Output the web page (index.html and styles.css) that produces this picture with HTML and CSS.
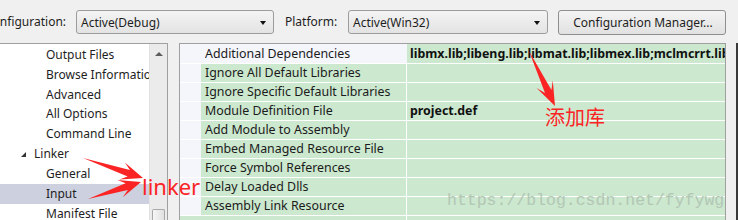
FILE: index.html
```html
<!DOCTYPE html>
<html>
<head>
<meta charset="utf-8">
<link rel="stylesheet" href="styles.css">
</head>
<body>
<div class="window">
  <div class="toolbar">
    <span class="lbl lbl-config">Configuration:</span>
    <div class="combo combo-config"><span class="combo-text">Active(Debug)</span><i class="caret"></i></div>
    <span class="lbl lbl-platform">Platform:</span>
    <div class="combo combo-platform"><span class="combo-text">Active(Win32)</span><i class="caret"></i></div>
    <div class="btn">Configuration Manager...</div>
  </div>
  <div class="main">
    <div class="tree">
      <ul class="tree-list">
        <li class="item l2">Output Files</li>
        <li class="item l2">Browse Information</li>
        <li class="item l2">Advanced</li>
        <li class="item l2">All Options</li>
        <li class="item l2">Command Line</li>
        <li class="item l1"><i class="expander"></i>Linker</li>
        <li class="item l2">General</li>
        <li class="item l2 selected">Input</li>
        <li class="item l2">Manifest File</li>
      </ul>
      <div class="vscroll">
        <i class="up-arrow"></i>
        <div class="thumb"></div>
      </div>
    </div>
    <div class="grid">
      <div class="row first"><div class="gutter"></div><div class="name">Additional Dependencies</div><div class="val">libmx.lib;libeng.lib;libmat.lib;libmex.lib;mclmcrrt.lib</div></div>
      <div class="row"><div class="gutter"></div><div class="name">Ignore All Default Libraries</div><div class="val"></div></div>
      <div class="row"><div class="gutter"></div><div class="name">Ignore Specific Default Libraries</div><div class="val"></div></div>
      <div class="row"><div class="gutter"></div><div class="name">Module Definition File</div><div class="val">project.def</div></div>
      <div class="row"><div class="gutter"></div><div class="name">Add Module to Assembly</div><div class="val"></div></div>
      <div class="row"><div class="gutter"></div><div class="name">Embed Managed Resource File</div><div class="val"></div></div>
      <div class="row"><div class="gutter"></div><div class="name">Force Symbol References</div><div class="val"></div></div>
      <div class="row"><div class="gutter"></div><div class="name">Delay Loaded Dlls</div><div class="val"></div></div>
      <div class="row"><div class="gutter"></div><div class="name">Assembly Link Resource</div><div class="val"></div></div>
      <div class="row category"><div class="gutter"></div><div class="name"></div><div class="val"></div></div>
      <div class="watermark">https://blog.csdn.net/fyfywg</div>
    </div>
    <div class="edge"></div>
  </div>
</div>
<svg class="annot" width="738" height="220" viewBox="0 0 738 220" xmlns="http://www.w3.org/2000/svg">
  <polygon fill="#fb2424" points="83,158 129.9,170 124.9,162.5 143,178 119.3,179.5 127.7,176.6"/>
  <polygon fill="#fb2424" points="88,199 125.6,183.3 117.4,180.1 141,182 122.8,197.3 127.8,189.9"/>
  <polygon fill="#fb2424" points="529,51 551.4,90 552.8,80.5 555,106 536.6,88.1 545,93"/>
</svg>
<div class="note note-linker">linker</div>
<div class="note note-lib">添加库</div>
</body>
</html>
```

FILE: styles.css
```css
html, body {
  margin: 0;
  padding: 0;
}
body {
  width: 738px;
  height: 220px;
  overflow: hidden;
  position: relative;
  background: #f0f0f0;
  font-family: "Noto Sans", "Open Sans", sans-serif;
  font-size: 12px;
  color: #1e1e1e;
}
.window {
  margin-left: -15px;
  width: 753px;
  height: 220px;
  overflow: hidden;
}
.toolbar {
  height: 43px;
  box-sizing: border-box;
  padding-top: 10px;
  display: flex;
  align-items: flex-start;
}
.lbl {
  height: 24px;
  line-height: 24px;
  white-space: nowrap;
}
.lbl-config {
  width: 91px;
}
.lbl-platform {
  width: 63px;
  margin-left: 11px;
}
.combo {
  height: 24px;
  box-sizing: border-box;
  border: 1px solid #9c9c9c;
  border-radius: 3px;
  background: linear-gradient(#f4f4f4, #e3e3e3);
  display: flex;
  align-items: center;
  padding-left: 4px;
  padding-right: 7px;
}
.combo-config {
  width: 198px;
}
.combo-platform {
  width: 200px;
}
.combo-text {
  flex: 1;
  white-space: nowrap;
}
.caret {
  width: 0;
  height: 0;
  border-left: 3.5px solid transparent;
  border-right: 3.5px solid transparent;
  border-top: 4px solid #111;
  margin-top: 1px;
}
.btn {
  margin-left: 10px;
  width: 168px;
  height: 25px;
  box-sizing: border-box;
  border: 1px solid #8f8f8f;
  border-radius: 3px;
  background: linear-gradient(#f4f4f4, #e1e1e1);
  display: flex;
  align-items: center;
  justify-content: center;
  white-space: nowrap;
  padding-left: 2px;
}
.main {
  display: flex;
  align-items: flex-start;
}
.tree {
  width: 183px;
  height: 180px;
  box-sizing: border-box;
  border: 1px solid #a0a0a0;
  border-bottom: none;
  background: #ffffff;
  display: flex;
}
.tree-list {
  list-style: none;
  margin: 0;
  padding: 1px 0 0 0;
  width: 163px;
  overflow: hidden;
}
.item {
  height: 19.75px;
  line-height: 19.75px;
  white-space: nowrap;
  overflow: hidden;
  display: flex;
  align-items: center;
}
.l2 {
  padding-left: 60px;
}
.l1 {
  padding-left: 35px;
}
.expander {
  width: 0;
  height: 0;
  border-left: 5px solid transparent;
  border-bottom: 5px solid #333;
  margin-right: 8px;
  margin-top: 1px;
}
.selected {
  background: #cdd0de;
  width: 162px;
  margin-top: 1px;
  height: 20px;
}
.vscroll {
  width: 17px;
  background: #ebebeb;
  border-left: 1px solid #e2e2e2;
  display: flex;
  flex-direction: column;
  align-items: center;
}
.up-arrow {
  width: 0;
  height: 0;
  border-left: 4px solid transparent;
  border-right: 4px solid transparent;
  border-bottom: 4px solid #5c5c5c;
  margin-top: 8px;
}
.thumb {
  margin-top: 153px;
  width: 13px;
  height: 14px;
  box-sizing: border-box;
  border: 1px solid #a8a8a8;
  border-bottom: none;
  border-radius: 2px 2px 0 0;
  background: linear-gradient(90deg, #f6f6f6, #e0e0e0);
}
.grid {
  margin-left: 11px;
  width: 547px;
  height: 180px;
  box-sizing: border-box;
  border: 1px solid #a0a0a0;
  border-bottom: none;
  padding-top: 1px;
  background: #f4f6fb;
  position: relative;
  overflow: hidden;
  font-size: 12.4px;
}
.row {
  display: flex;
  height: 19px;
  box-sizing: border-box;
  border-bottom: 1px solid #ffffff;
}
.first {
  margin-top: -1px;
  height: 20px;
}
.gutter {
  width: 21px;
  background: #f4f6fb;
}
.name {
  width: 206px;
  box-sizing: border-box;
  padding-left: 4px;
  border-right: 1px solid #ffffff;
  background: #cce8cf;
  line-height: 18px;
  white-space: nowrap;
  overflow: hidden;
  color: #1b1b1b;
}
.first .name,
.first .val {
  line-height: 20px;
}
.first .name {
  background: #f4f6fb;
  border-right-color: #f4f6fb;
}
.val {
  flex: 1;
  background: #cce8cf;
  padding-left: 3px;
  line-height: 18px;
  font-weight: bold;
  white-space: nowrap;
  overflow: hidden;
  color: #111;
}
.category .gutter {
  background: #cce8cf;
}
.watermark {
  position: absolute;
  left: 267px;
  top: 148px;
  font-family: "Liberation Mono", monospace;
  font-size: 16.5px;
  line-height: 18px;
  color: #b3c7b5;
  white-space: nowrap;
}
.edge {
  margin-left: 10px;
  width: 2px;
  height: 180px;
  background: #3a3a3a;
}
.annot {
  position: absolute;
  left: 0;
  top: 0;
}
.note {
  position: absolute;
  color: #fb2424;
  white-space: nowrap;
}
.note-linker {
  left: 142px;
  top: 175px;
  font-size: 22px;
  line-height: 22px;
  font-family: "Noto Sans", sans-serif;
}
.note-lib {
  left: 545px;
  top: 104px;
  font-size: 20px;
  line-height: 26px;
  font-family: "Noto Sans CJK SC", sans-serif;
}
```
